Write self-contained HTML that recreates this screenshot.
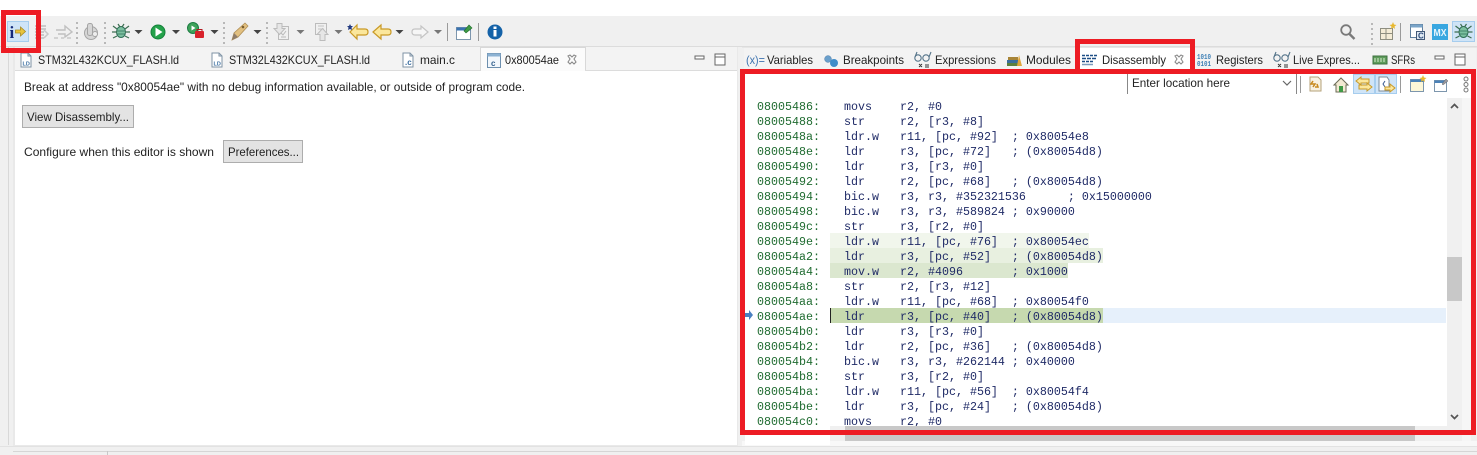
<!DOCTYPE html>
<html><head><meta charset="utf-8"><title>Disassembly</title>
<style>
html,body{margin:0;padding:0;background:#fff;width:1477px;height:455px;overflow:hidden}
svg{display:block}
text{font-family:"Liberation Sans",sans-serif;font-size:12px;fill:#222}
.m text{font-family:"Liberation Mono",monospace;font-size:11.67px;white-space:pre}
.a text{fill:#1f6b30}
.o text{fill:#1f2a66}
</style></head><body>
<svg width="1477" height="455" viewBox="0 0 1477 455" xmlns="http://www.w3.org/2000/svg">
<defs>
<g id="dd"><path d="M0 0h8l-4 4z" fill="#444"/></g>
<g id="ddg"><path d="M0 0h8l-4 4z" fill="#777"/></g>
<g id="sep"><path d="M0 0v2M0 5v2M0 10v2M0 15v2M0 20v2" stroke="#aaa" stroke-width="1.6"/></g>
<g id="bug"><ellipse cx="0" cy="0" rx="4.5" ry="5.5" fill="#7cc0a0" stroke="#2f6f58"/><path d="M-4 -1h8M-4 2h8" stroke="#2f6f58" stroke-width=".8"/><path d="M-8 -6l4 3M8 -6l-4 3M-9 0h5M9 0h-5M-8 6l4 -2M8 6l-4 -2M-3 -8l2 3M3 -8l-2 3" stroke="#3d6e52" stroke-width="1.2"/></g>
<g id="glasses" fill="none" stroke="#55748a" stroke-width="1.1"><circle cx="-4" cy="-1" r="3.2"/><circle cx="4" cy="-1" r="3.2"/><path d="M-7 -2l2-5M7 -2l2-5"/><path d="M-3 5l3 3M0 5l-3 3M3 6h4M3 8h4" stroke="#333" stroke-width=".9"/></g>
<g id="xclose" fill="none" stroke="#8a8a8a" stroke-width="1.1"><path d="M-4 -4l2-1 2 2 2-2 2 1-2 3 2 3-2 2-2-2-2 2-2-2 2-3z"/></g>
<g id="minmax"><rect x="0" y="0" width="9" height="3" fill="#fff" stroke="#666"/><rect x="20" y="-2" width="10" height="11" fill="#fff" stroke="#666"/><path d="M20 1h10" stroke="#666"/></g>
<g id="doc"><path d="M0 0h7l3 3v11H0z" fill="#fff" stroke="#7f93a6"/><path d="M7 0v3h3" fill="none" stroke="#7f93a6"/></g>
</defs>

<!-- base -->
<rect x="0" y="16" width="1477" height="439" fill="#f0f0f0"/>
<rect x="0" y="0" width="1477" height="16" fill="#fff"/>
<path d="M0 46.500H1477" stroke="#dcdcdc"/>

<!-- left edge -->
<rect x="8" y="47" width="1" height="398" fill="#d8d8d8"/>
<rect x="13" y="47" width="725" height="399" fill="#e9e9e9"/>
<rect x="15" y="71" width="722" height="374" fill="#fff"/>
<!-- editor tab bar -->
<rect x="15" y="47" width="722" height="24" fill="#f3f3f3"/>
<rect x="480" y="47" width="105" height="24" fill="#fbfbfb"/>
<path d="M480.500 71V47.500H585.500V71" fill="none" stroke="#d8d8d8"/>
<path d="M15 70.500H480M585 70.500H737" stroke="#dcdcdc"/>
<!-- bottom status -->
<path d="M0 446.500H1477" stroke="#e2e2e2"/>
<path d="M13 451.500H1477" stroke="#d6d6d6"/>
<path d="M107.500 451V455" stroke="#c8c8c8"/>

<!-- toolbar left -->
<rect x="7.500" y="21.500" width="21" height="20" fill="#cfe4f7" stroke="#a6cdee"/>
<text x="9.500" y="38" style="font-family:'Liberation Serif',serif;font-size:17px;font-weight:bold;fill:#142a7a">i</text>
<path d="M15.500 30h5v-3l5 4.500-5 4.500v-3h-5z" fill="#e8c43c" stroke="#a78a22" stroke-width=".8"/>
<g fill="none" stroke="#bdbdbd" stroke-width="1.500"><path d="M35 26h11M35 29h11M35 32h9M35 35h9M35 38h9"/><path d="M44 30l4 4-4 4" stroke="#c8c8c8"/></g>
<g fill="none" stroke="#c0c0c0" stroke-width="1.400"><path d="M56 30h9v-4l7 6-7 5v-3h-7"/><path d="M54 38h4M61 38h3M67 38h4" stroke-width="1.200"/></g>
<use href="#sep" x="77" y="22"/>
<g fill="#d6d6d6" stroke="#a5a5a5"><circle cx="91" cy="33" r="6.500"/><rect x="87.500" y="23.500" width="5" height="12" rx="2"/><circle cx="95" cy="34" r="2.500" fill="#eee"/></g>
<use href="#sep" x="105" y="22"/>
<use href="#bug" x="121" y="32"/>
<use href="#dd" x="134.500" y="30"/>
<circle cx="158" cy="32" r="7" fill="#24a24a" stroke="#14803a"/><path d="M155.500 27.500v9l7-4.500z" fill="#fff"/>
<use href="#dd" x="172" y="30"/>
<circle cx="193" cy="28" r="5.500" fill="#3ea35a" stroke="#1e7c44"/><path d="M191.500 25.500v5l4-2.500z" fill="#fff"/>
<rect x="195" y="31" width="9" height="7" rx="1" fill="#d8222b"/><path d="M197 31v-1.500h5V31" fill="none" stroke="#b01820"/>
<use href="#dd" x="210.500" y="30"/>
<use href="#sep" x="224" y="22"/>
<path d="M232 40l2-7 11-10 3 3-10 11z" fill="#e2c080" stroke="#b08f55" stroke-width=".8"/><path d="M232 40l2-7 4 4z" fill="#8f7d6a"/><circle cx="243" cy="27" r="1.300" fill="#7a5f30"/>
<use href="#dd" x="253.500" y="30"/>
<use href="#sep" x="267" y="22"/>
<g fill="#f0f0f0" stroke="#bcbcbc"><rect x="278.500" y="26.500" width="10" height="13"/><path d="M277 23.500h5v5h3l-5.500 6-5.500-6h3z" fill="#e6e6e6"/></g>
<path d="M281 33l2 2 3-4M281 37h5" fill="none" stroke="#b9b9b9"/>
<use href="#ddg" x="296.500" y="30"/>
<g fill="#f0f0f0" stroke="#bcbcbc"><rect x="315.500" y="23.500" width="11" height="11"/><path d="M320 40.500v-6h-3l5.500-6 5.500 6h-3v6z" fill="#e6e6e6"/></g>
<path d="M318 26h6M318 29h6" stroke="#c2c2c2"/>
<use href="#ddg" x="334.500" y="30"/>
<path d="M350 32l7-7v4h8q3 0 3 3t-3 3h-8v4z" fill="#fbe79c" stroke="#c99a27" stroke-width="1.200"/>
<path d="M350 24l1 2 2 0-1.500 1.500L352 30l-2-1-2 1 .5-2.500L347 26h2z" fill="#223a80"/>
<path d="M373 32l8-7v4h7q3 0 3 3t-3 3h-7v4z" fill="#fbe79c" stroke="#c99a27" stroke-width="1.200"/>
<use href="#dd" x="395.500" y="30"/>
<path d="M428 32l-7 6v-3h-6q-3 0-3-3t3-3h6v-3z" fill="#f6f6f6" stroke="#c4c4c4" stroke-width="1.200"/>
<use href="#ddg" x="434" y="30"/>
<path d="M447.500 23V41" stroke="#9a9a9a"/>
<rect x="456.500" y="27.500" width="14" height="12" fill="#fff" stroke="#7d96ad"/><rect x="456.500" y="27.500" width="14" height="3" fill="#3a73b0"/>
<path d="M464 31l5-6 3 3-6 5z" fill="#3f9a46" stroke="#23702c" stroke-width=".6"/>
<path d="M478.500 23V41" stroke="#9a9a9a"/>
<circle cx="495" cy="32" r="7.500" fill="#1462a8"/><rect x="493.500" y="30" width="3" height="6.500" fill="#fff"/><rect x="493.500" y="26.500" width="3" height="2.500" fill="#fff"/>

<!-- toolbar right -->
<circle cx="1346" cy="30" r="4.800" fill="none" stroke="#7a7a7a" stroke-width="1.800"/><path d="M1349.500 34l5 5" stroke="#7a7a7a" stroke-width="2.400"/>
<use href="#sep" x="1372" y="23"/>
<rect x="1380.500" y="28.500" width="12" height="11" fill="#f4ecd6" stroke="#8e8e80"/><path d="M1380 33.500h13M1386 28v12" stroke="#8e8e80"/><path d="M1393 22l1 2.500 2.500.5-2 1.500.5 2.500-2-1.500-2 1.500.5-2.500-2-1.500 2.500-.5z" fill="#e8b830"/>
<path d="M1400.500 23V41" stroke="#9a9a9a"/>
<rect x="1410.500" y="24.500" width="12" height="13" fill="#fff" stroke="#5f7f9e"/><rect x="1410.500" y="24.500" width="12" height="3" fill="#7aa4c8"/><rect x="1416.500" y="31.500" width="8" height="8" fill="#dfe9f3" stroke="#445a78"/><text x="1418" y="38.500" style="font-size:8px;font-weight:bold;fill:#2c4a78">C</text>
<rect x="1432" y="24" width="16" height="16" fill="#39a7e0"/><text x="1433.500" y="36" textLength="13" lengthAdjust="spacingAndGlyphs" style="font-size:10px;font-weight:bold;fill:#e9f6fd">MX</text>
<rect x="1452.500" y="21.500" width="22" height="20" fill="#cfe4f7" stroke="#a6cdee"/>
<use href="#bug" x="1463.500" y="32"/>

<!-- editor tabs -->
<use href="#doc" x="21" y="53"/><text x="22.500" y="65.500" style="font-size:5.500px;font-weight:bold;fill:#3b6ea0">LD</text>
<text x="38" y="64" textLength="141" lengthAdjust="spacingAndGlyphs">STM32L432KCUX_FLASH.ld</text>
<use href="#doc" x="212" y="53"/><text x="213.500" y="65.500" style="font-size:5.500px;font-weight:bold;fill:#3b6ea0">LD</text>
<text x="229" y="64" textLength="141" lengthAdjust="spacingAndGlyphs">STM32L432KCUX_FLASH.ld</text>
<use href="#doc" x="403" y="53"/><text x="405" y="65" style="font-size:8px;font-weight:bold;fill:#3b6ea0">.c</text>
<text x="420" y="64" textLength="35" lengthAdjust="spacingAndGlyphs">main.c</text>
<rect x="487.500" y="53.500" width="13" height="14" fill="#f2f7fc" stroke="#6d8fae"/><rect x="487.500" y="53.500" width="13" height="3" fill="#8cb2d3"/><text x="491" y="66" style="font-size:8px;font-weight:bold;fill:#34618e">c</text>
<text x="505" y="64" textLength="54" lengthAdjust="spacingAndGlyphs">0x80054ae</text>
<use href="#xclose" x="572" y="60"/>
<use href="#minmax" x="695" y="56"/>

<!-- editor content -->
<text x="24" y="91" textLength="501" lengthAdjust="spacingAndGlyphs">Break at address "0x80054ae" with no debug information available, or outside of program code.</text>
<rect x="22.500" y="105.500" width="111" height="22" fill="#e3e3e3" stroke="#adadad"/>
<text x="27" y="121" textLength="102" lengthAdjust="spacingAndGlyphs">View Disassembly...</text>
<text x="24" y="156" textLength="190" lengthAdjust="spacingAndGlyphs">Configure when this editor is shown</text>
<rect x="223.500" y="140.500" width="79" height="22" fill="#e3e3e3" stroke="#adadad"/>
<text x="228" y="156" textLength="71" lengthAdjust="spacingAndGlyphs">Preferences...</text>

<!-- right pane -->
<rect x="742" y="47" width="735" height="398" fill="#f0f0f0"/>
<path d="M742 47H1477" stroke="#dcdcdc"/>
<rect x="744" y="48" width="732" height="23" fill="#f3f3f3"/>
<text x="746" y="64" textLength="19" lengthAdjust="spacingAndGlyphs" style="fill:#3f74b0">(x)=</text>
<text x="767" y="64" textLength="46" lengthAdjust="spacingAndGlyphs">Variables</text>
<circle cx="828" cy="59" r="3.400" fill="#6a9fcb" stroke="#4f7da8" stroke-width=".5"/><circle cx="834" cy="63" r="4" fill="#3f8cc8"/>
<text x="843" y="64" textLength="61" lengthAdjust="spacingAndGlyphs">Breakpoints</text>
<use href="#glasses" x="922" y="59"/>
<text x="935" y="64" textLength="61" lengthAdjust="spacingAndGlyphs">Expressions</text>
<rect x="1007" y="63" width="11" height="3" fill="#5c7f3e"/><rect x="1007" y="60" width="11" height="3" fill="#3a6d9c"/><rect x="1008" y="57" width="10" height="3" fill="#a88538"/><path d="M1017 66l2-11 3 11z" fill="#e0a53a"/>
<text x="1026" y="64" textLength="45" lengthAdjust="spacingAndGlyphs">Modules</text>
<rect x="1075" y="48" width="120" height="23" fill="#fff"/>
<g stroke="#1d4e86" stroke-width="1.500"><path d="M1082 55.500h15" stroke-dasharray="3 1"/><path d="M1082 58.500h15" stroke-dasharray="4 1"/><path d="M1082 61.500h11" stroke-dasharray="3 1"/><path d="M1082 64.500h11" stroke="#7c9cbc"/></g>
<text x="1102" y="64" textLength="64" lengthAdjust="spacingAndGlyphs">Disassembly</text>
<use href="#xclose" x="1179" y="60"/>
<text x="1197" y="59" textLength="14" lengthAdjust="spacingAndGlyphs" style="font-family:'Liberation Mono',monospace;font-size:7px;font-weight:bold;fill:#3c7fb5">1010</text>
<text x="1197" y="66" textLength="14" lengthAdjust="spacingAndGlyphs" style="font-family:'Liberation Mono',monospace;font-size:7px;font-weight:bold;fill:#3c7fb5">0101</text>
<text x="1216" y="64" textLength="47" lengthAdjust="spacingAndGlyphs">Registers</text>
<use href="#glasses" x="1281" y="59"/>
<text x="1293" y="64" textLength="67" lengthAdjust="spacingAndGlyphs">Live Expres...</text>
<rect x="1373" y="56" width="14" height="8" fill="#5e9c5a" stroke="#3f7040"/><path d="M1375 58v4M1378 58v4M1381 58v4M1384 58v4" stroke="#d9ecd2"/>
<text x="1391" y="64" textLength="24" lengthAdjust="spacingAndGlyphs">SFRs</text>
<use href="#minmax" x="1435" y="56"/>

<!-- disasm body -->
<rect x="745" y="71" width="726" height="355" fill="#fff"/>
<rect x="1127" y="72" width="1" height="22" fill="#888"/>
<rect x="1296" y="72" width="1" height="22" fill="#888"/>
<text x="1132" y="87" textLength="98" lengthAdjust="spacingAndGlyphs">Enter location here</text>
<path d="M1283 81l4 4 4-4" fill="none" stroke="#666" stroke-width="1.200"/>
<path d="M1300.500 76V93M1400.500 76V93" stroke="#9a9a9a"/>
<path d="M1310 77h8l3 3v11h-11z" fill="#f8f2e2" stroke="#b5a27a"/><path d="M1313 81l-2 3h4l-2 3M1317 84l1 3h-3" fill="none" stroke="#c88a1e" stroke-width="1.500"/>
<path d="M1334 85l7-7 7 7h-2v7h-10v-7z" fill="#f3ead2" stroke="#6b6b56"/><rect x="1339" y="86" width="4" height="6" fill="#3f9a46"/>
<rect x="1353.500" y="74.500" width="21" height="19" fill="#cfe4f7" stroke="#a6cdee"/>
<path d="M1356 81l5-4v2h8v4h-8v2zM1372 87l-5-4v2h-8v4h8v2z" fill="#fbe79c" stroke="#c99a27"/>
<rect x="1375.500" y="74.500" width="21" height="19" fill="#cfe4f7" stroke="#a6cdee"/>
<path d="M1379 77h8l2 3v11h-10z" fill="#fff" stroke="#7d8b99"/><path d="M1385 81l-2 3 2 3" fill="none" stroke="#3a5a90"/><path d="M1385 87h5v-3l5 4-5 4v-2h-5z" fill="#fbe79c" stroke="#c99a27"/>
<rect x="1410.500" y="79.500" width="13" height="12" fill="#fdf7d8" stroke="#7d96ad"/><rect x="1410.500" y="79.500" width="13" height="2.500" fill="#4b82b8"/><path d="M1423 75l1 2.500 2.500.5-2 1.500.5 2.500-2-1.500-2 1.500.5-2.500-2-1.500 2.500-.5z" fill="#e8b830"/>
<rect x="1434.500" y="80.500" width="12" height="11" fill="#fff" stroke="#7d96ad"/><rect x="1434.500" y="80.500" width="12" height="2.500" fill="#4b82b8"/><path d="M1442 84l4-5 2 2-5 4z" fill="#9a9aa0" stroke="#666" stroke-width=".5"/>
<g fill="none" stroke="#777"><circle cx="1466" cy="79" r="2"/><circle cx="1466" cy="84.500" r="2"/><circle cx="1466" cy="90" r="2"/></g>

<!-- highlights -->
<rect x="830" y="233" width="259" height="15" fill="#f1f6ec"/>
<rect x="830" y="248" width="273" height="15" fill="#e8f0e0"/>
<rect x="830" y="263" width="238" height="15" fill="#dbe7cf"/>
<rect x="831" y="308" width="615" height="15" fill="#e6f0fb"/>
<rect x="831" y="308" width="272" height="15" fill="#c6d9af"/>
<rect x="830" y="308" width="1" height="15" fill="#222"/>
<path d="M745 313h4v-3l4 5-4 5v-3h-4z" fill="#4a80c0"/>

<!-- disasm text -->
<g class="m">
<g class="a">
<text x="757" y="110">08005486:</text>
<text x="757" y="125">08005488:</text>
<text x="757" y="140">0800548a:</text>
<text x="757" y="155">0800548e:</text>
<text x="757" y="170">08005490:</text>
<text x="757" y="185">08005492:</text>
<text x="757" y="200">08005494:</text>
<text x="757" y="215">08005498:</text>
<text x="757" y="230">0800549c:</text>
<text x="757" y="245">0800549e:</text>
<text x="757" y="260">080054a2:</text>
<text x="757" y="275">080054a4:</text>
<text x="757" y="290">080054a8:</text>
<text x="757" y="305">080054aa:</text>
<text x="757" y="320">080054ae:</text>
<text x="757" y="335">080054b0:</text>
<text x="757" y="350">080054b2:</text>
<text x="757" y="365">080054b4:</text>
<text x="757" y="380">080054b8:</text>
<text x="757" y="395">080054ba:</text>
<text x="757" y="410">080054be:</text>
<text x="757" y="425">080054c0:</text>
</g>
<g class="o">
<text x="844" y="110">movs</text><text x="900" y="110">r2, #0</text>
<text x="844" y="125">str</text><text x="900" y="125">r2, [r3, #8]</text>
<text x="844" y="140">ldr.w</text><text x="900" y="140">r11, [pc, #92]  ; 0x80054e8</text>
<text x="844" y="155">ldr</text><text x="900" y="155">r3, [pc, #72]   ; (0x80054d8)</text>
<text x="844" y="170">ldr</text><text x="900" y="170">r3, [r3, #0]</text>
<text x="844" y="185">ldr</text><text x="900" y="185">r2, [pc, #68]   ; (0x80054d8)</text>
<text x="844" y="200">bic.w</text><text x="900" y="200">r3, r3, #352321536      ; 0x15000000</text>
<text x="844" y="215">bic.w</text><text x="900" y="215">r3, r3, #589824 ; 0x90000</text>
<text x="844" y="230">str</text><text x="900" y="230">r3, [r2, #0]</text>
<text x="844" y="245">ldr.w</text><text x="900" y="245">r11, [pc, #76]  ; 0x80054ec</text>
<text x="844" y="260">ldr</text><text x="900" y="260">r3, [pc, #52]   ; (0x80054d8)</text>
<text x="844" y="275">mov.w</text><text x="900" y="275">r2, #4096       ; 0x1000</text>
<text x="844" y="290">str</text><text x="900" y="290">r2, [r3, #12]</text>
<text x="844" y="305">ldr.w</text><text x="900" y="305">r11, [pc, #68]  ; 0x80054f0</text>
<text x="844" y="320">ldr</text><text x="900" y="320">r3, [pc, #40]   ; (0x80054d8)</text>
<text x="844" y="335">ldr</text><text x="900" y="335">r3, [r3, #0]</text>
<text x="844" y="350">ldr</text><text x="900" y="350">r2, [pc, #36]   ; (0x80054d8)</text>
<text x="844" y="365">bic.w</text><text x="900" y="365">r3, r3, #262144 ; 0x40000</text>
<text x="844" y="380">str</text><text x="900" y="380">r3, [r2, #0]</text>
<text x="844" y="395">ldr.w</text><text x="900" y="395">r11, [pc, #56]  ; 0x80054f4</text>
<text x="844" y="410">ldr</text><text x="900" y="410">r3, [pc, #24]   ; (0x80054d8)</text>
<text x="844" y="425">movs</text><text x="900" y="425">r2, #0</text>
</g>
</g>

<!-- scrollbars -->
<rect x="1447" y="98" width="15" height="328" fill="#f0f0f0"/>
<rect x="1447" y="257" width="15" height="44" fill="#c8c8c8"/>
<path d="M1451 108l3.500-3.500 3.500 3.500" fill="none" stroke="#555" stroke-width="1.700"/>
<path d="M1451 415l3.500 3.500 3.500-3.500" fill="none" stroke="#555" stroke-width="1.700"/>
<rect x="1465.500" y="284.500" width="5" height="4" fill="#fff" stroke="#cfdcc0"/>
<rect x="1462" y="98" width="9" height="343" fill="#f6f6f6"/>
<rect x="830" y="426" width="632" height="15" fill="#f0f0f0"/>
<rect x="845" y="426" width="570" height="15" fill="#c8c8c8"/>
<rect x="1415" y="426" width="47" height="15" fill="#f0f0f0"/>
<rect x="745" y="426" width="85" height="19" fill="#fff"/>
<rect x="742" y="441" width="735" height="5" fill="#fff" opacity=".5"/>

<!-- red annotation boxes -->
<g fill="none" stroke="#ed1c24" stroke-width="5">
<rect x="3.500" y="12.500" width="35" height="38"/>
<path d="M1077.500 72V41.500H1192.500V72"/>
<rect x="742.500" y="71.500" width="731" height="361"/>
</g>
</svg>
</body></html>
